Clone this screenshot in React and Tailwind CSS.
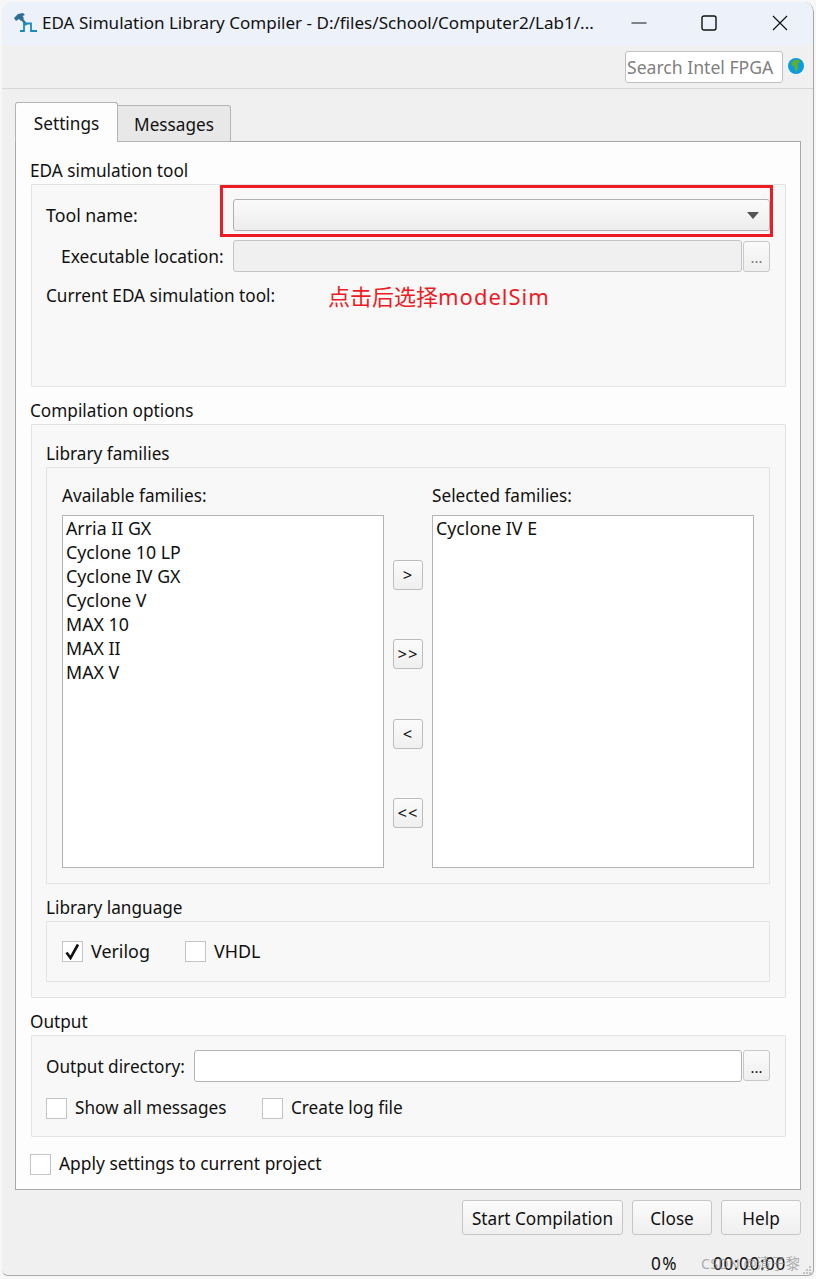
import React from 'react';

const Group = ({ className, children }) => (
  <div className={`border border-[#e3e3e3] bg-[#f8f8f8] rounded-[1px] ${className}`}>{children}</div>
);

const Check = ({ checked }) => (
  <span className="flex items-center justify-center w-[21px] h-[21px] border border-[#c4c4c4] bg-white shrink-0">
    {checked && (
      <svg width="17" height="17" viewBox="0 0 17 17">
        <path d="M2.5 9.5 L6.5 15 L14 1.5" fill="none" stroke="#111" strokeWidth="2.6" />
      </svg>
    )}
  </span>
);

const SmallButton = ({ children }) => (
  <button className="flex items-center justify-center w-[30px] h-[30px] border border-[#bcbcbc] rounded-[3px] bg-gradient-to-b from-[#fbfbfb] to-[#efefef] text-[16.5px] leading-none tracking-[1px]">
    {children}
  </button>
);

const DotsButton = ({ muted }) => (
  <button className={`w-[27px] h-[31px] ml-px border border-[#c8c8c8] rounded-[3px] bg-gradient-to-b from-[#fafafa] to-[#efefef] text-[15px] leading-none pt-[3px] ${muted ? 'text-[#777]' : 'text-[#111]'}`}>
    ...
  </button>
);

const FooterButton = ({ className, children }) => (
  <button className={`h-[35px] pt-[2px] border border-[#c6c6c6] rounded-[3px] bg-gradient-to-b from-[#fbfbfb] to-[#efefef] ${className}`}>
    {children}
  </button>
);

const Label = ({ className = '', children }) => (
  <div className={`h-[24px] leading-[25px] whitespace-nowrap ${className}`}>{children}</div>
);

const FamilyList = ({ items }) => (
  <div className="w-[322px] h-[353px] border border-[#b4b4b4] bg-white pl-[3px] text-[17.8px]">
    {items.map((item) => (
      <div key={item} className="h-[24px] leading-[24px]">{item}</div>
    ))}
  </div>
);

const available = ['Arria II GX', 'Cyclone 10 LP', 'Cyclone IV GX', 'Cyclone V', 'MAX 10', 'MAX II', 'MAX V'];

export default function App() {
  return (
    <div className="relative w-[816px] h-[1279px] bg-[#f7f7f7] pl-[2px] pr-[2px] pt-[2px] pb-[3px] overflow-hidden font-['Noto_Sans',sans-serif] text-[17.2px] text-[#111]">
      <div className="flex flex-col h-[1274px] bg-[#f0f0f0] rounded-t-[10px] rounded-b-[6px] border-r border-b border-[#a8a8a8] overflow-hidden">
        {/* title bar */}
        <div className="flex items-center h-[43px] pb-[2px] bg-[#edf2fa] shrink-0">
          <svg className="ml-[12px]" width="24" height="24" viewBox="0 0 24 24">
            <path d="M0 7 L4 3 L9 2 L11 4 L8.5 5 L10 7 L7 10 L5 8 L2 10 Z" fill="#2f6f96" />
            <path d="M7 7 L12.5 14" stroke="#2f6f96" strokeWidth="2.4" fill="none" />
            <path d="M6 20 H10 V12.5 H17 V20 H23" stroke="#1a8ac0" strokeWidth="1.8" fill="none" />
          </svg>
          <span className="ml-[4px] whitespace-nowrap text-[17.06px]">EDA Simulation Library Compiler - D:/files/School/Computer2/Lab1/...</span>
          <svg className="ml-auto" width="16" height="16" viewBox="0 0 16 16">
            <path d="M0.5 8 H15.5" stroke="#111" strokeWidth="1.1" />
          </svg>
          <svg className="ml-[54px]" width="16" height="16" viewBox="0 0 16 16">
            <rect x="1" y="1" width="14" height="14" rx="2" fill="none" stroke="#111" strokeWidth="1.4" />
          </svg>
          <svg className="ml-[55px] mr-[25px]" width="16" height="16" viewBox="0 0 16 16">
            <path d="M1 1 L15 15 M15 1 L1 15" stroke="#111" strokeWidth="1.2" />
          </svg>
        </div>

        {/* toolbar */}
        <div className="flex items-center justify-end h-[44px] pt-[1px] border-b border-[#d6d6d6] shrink-0">
          <div className="flex items-center w-[158px] h-[32px] border border-[#c0c0c0] rounded-[3px] bg-white pl-[1px] text-[17.6px] text-[#808080] whitespace-nowrap">
            Search Intel FPGA
          </div>
          <svg className="ml-[5px] mr-[9px] mb-[2px]" width="16" height="16" viewBox="0 0 16 16">
            <circle cx="8" cy="8" r="8" fill="#0b9be3" />
            <path d="M6 2 L11 1.5 L12 4 L9.5 6 L10.5 9 L8.5 13.5 L7 13 L6.5 9 L3.5 7 L3.5 4.5 Z" fill="#5fae2c" />
          </svg>
        </div>

        {/* tabs and pane */}
        <div className="flex flex-col flex-1 pl-[13px] pr-[12px] pt-[13px]">
          <div className="flex items-end h-[40px] -mb-px relative z-10">
            <div className="flex items-center justify-center w-[103px] h-[40px] pt-[3px] border border-b-0 border-[#b4b4b4] rounded-t-[3px] bg-[#fdfdfd]">Settings</div>
            <div className="flex items-center justify-center w-[113px] h-[37px] pt-[3px] border border-l-0 border-[#b4b4b4] rounded-tr-[3px] bg-[#e8e8e8]">Messages</div>
          </div>
          <div className="h-[1049px] border border-[#a8a8a8] bg-[#fdfdfd] px-[14px] pt-[16px]">
            <Label>EDA simulation tool</Label>
            <Group className="h-[203px] mt-[2px] ml-px pl-[14px] pr-[15px] pt-[14px]">
              <div className="flex items-center h-[32px]">
                <span className="w-[187px] pt-[1px] text-[17.8px]">Tool name:</span>
                <div className="flex items-center justify-end flex-1 h-[32px] border border-[#b0b0b0] rounded-[3px] bg-gradient-to-b from-[#fbfbfb] to-[#ededed] pr-[10px]">
                  <span className="w-0 h-0 border-x-[6px] border-x-transparent border-t-[7px] border-t-[#555]" />
                </div>
              </div>
              <div className="flex items-center h-[32px] mt-[9px]">
                <span className="w-[187px] pl-[15px] pt-[1px] text-[17.4px] whitespace-nowrap">Executable location:</span>
                <div className="flex-1 h-[32px] border border-[#c4c4c4] rounded-[3px] bg-[#f0f0f0]" />
                <DotsButton muted />
              </div>
              <Label className="mt-[11px]">Current EDA simulation tool:</Label>
            </Group>

            <Label className="mt-[11px]">Compilation options</Label>
            <Group className="h-[574px] mt-[2px] ml-px pl-[14px] pr-[15px] pt-[16px]">
              <Label>Library families</Label>
              <Group className="h-[417px] mt-[2px] px-[15px] pt-[15px] bg-[#f5f5f5]">
                <div className="flex">
                  <div>
                    <Label>Available families:</Label>
                    <div className="mt-[8px]"><FamilyList items={available} /></div>
                  </div>
                  <div className="flex flex-col items-center gap-[49.4px] w-[48px] pt-[77px]">
                    <SmallButton>&gt;</SmallButton>
                    <SmallButton>&gt;&gt;</SmallButton>
                    <SmallButton>&lt;</SmallButton>
                    <SmallButton>&lt;&lt;</SmallButton>
                  </div>
                  <div>
                    <Label>Selected families:</Label>
                    <div className="mt-[8px]"><FamilyList items={['Cyclone IV E']} /></div>
                  </div>
                </div>
              </Group>
              <Label className="mt-[11px]">Library language</Label>
              <Group className="flex items-center h-[61px] mt-[2px] pl-[15px] text-[17.9px]">
                <Check checked />
                <span className="ml-[8px] w-[94px]">Verilog</span>
                <Check />
                <span className="ml-[8px]">VHDL</span>
              </Group>
            </Group>

            <Label className="mt-[11px]">Output</Label>
            <Group className="h-[102px] mt-[2px] ml-px pl-[14px] pr-[15px] pt-[14px]">
              <div className="flex items-start h-[32px]">
                <span className="w-[148px] pt-[1px] leading-[32px] whitespace-nowrap">Output directory:</span>
                <div className="flex-1 h-[32px] border border-[#b4b4b4] rounded-[3px] bg-white" />
                <DotsButton />
              </div>
              <div className="flex items-center mt-[13px]">
                <Check />
                <span className="ml-[8px] w-[187px] pb-[1px] whitespace-nowrap">Show all messages</span>
                <Check />
                <span className="ml-[8px] pb-[1px] whitespace-nowrap">Create log file</span>
              </div>
            </Group>

            <div className="flex items-center mt-[13px]">
              <Check />
              <span className="ml-[8px] pb-[3px] text-[17.4px] whitespace-nowrap">Apply settings to current project</span>
            </div>
          </div>

          {/* footer */}
          <div className="flex justify-end gap-[9px] mt-[10px]">
            <FooterButton className="w-[161px]">Start Compilation</FooterButton>
            <FooterButton className="w-[80px]">Close</FooterButton>
            <FooterButton className="w-[80px]">Help</FooterButton>
          </div>
          <div className="flex justify-end gap-[34px] h-[24px] mt-[17px] pr-[15px] leading-[24px]">
            <span className="w-[28px] tracking-[1.5px]">0%</span>
            <span className="tracking-[0.6px]">00:00:00</span>
          </div>
        </div>
      </div>

      {/* annotation drawn over the dialog */}
      <div className="absolute left-[220px] top-[185px] w-[553px] h-[52px] border-[3px] border-[#ed1c24]" />
      <div className="absolute left-[328px] top-[280px] text-[22px] leading-[32px] text-[#ed1c24] font-['Noto_Sans','Noto_Sans_CJK_SC',sans-serif] whitespace-nowrap">点击后选择<span className="tracking-[1px]">modelSim</span></div>
      {/* watermark */}
      <div className="absolute left-[701px] top-[1253px] text-[14.5px] leading-[20px] text-[#8c8c8c]/70 font-['Noto_Sans','Noto_Sans_CJK_SC',sans-serif] whitespace-nowrap">CSDN @清子黎</div>
      {/* resize grip */}
      <svg className="absolute left-[802px] top-[1265px]" width="10" height="10" viewBox="0 0 10 10" fill="#c4c4c4">
        <rect x="7" y="1" width="2" height="2" />
        <rect x="4" y="4" width="2" height="2" />
        <rect x="7" y="4" width="2" height="2" />
        <rect x="1" y="7" width="2" height="2" />
        <rect x="4" y="7" width="2" height="2" />
        <rect x="7" y="7" width="2" height="2" />
      </svg>
    </div>
  );
}
